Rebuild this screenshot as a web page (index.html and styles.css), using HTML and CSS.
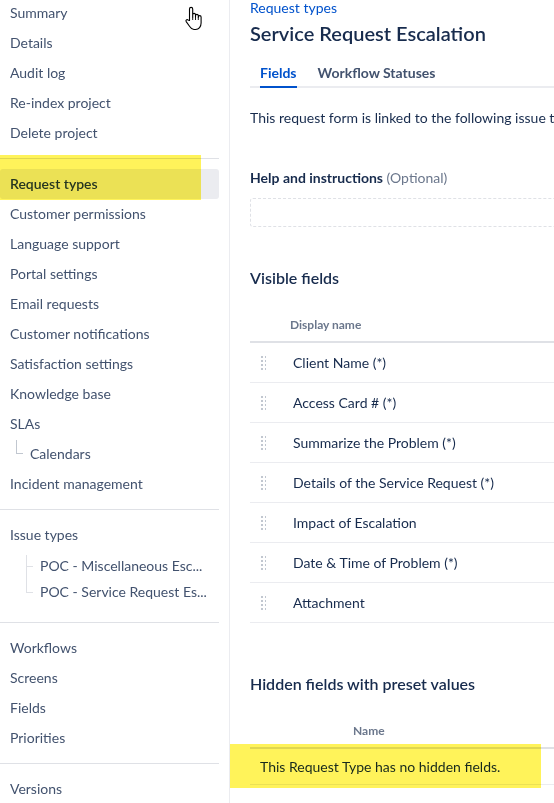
FILE: index.html
```html
<!DOCTYPE html>
<html lang="en">
<head>
<meta charset="utf-8">
<title>Service Request Escalation</title>
<link rel="stylesheet" href="styles.css">
</head>
<body>
<div class="page">
  <aside class="sidebar">
    <nav class="nav">
      <ul class="group first">
        <li class="item">Summary</li>
        <li class="item">Details</li>
        <li class="item">Audit log</li>
        <li class="item">Re-index project</li>
        <li class="item">Delete project</li>
      </ul>
      <hr class="divider">
      <ul class="group">
        <li class="item active">Request types</li>
        <li class="item">Customer permissions</li>
        <li class="item">Language support</li>
        <li class="item">Portal settings</li>
        <li class="item">Email requests</li>
        <li class="item">Customer notifications</li>
        <li class="item">Satisfaction settings</li>
        <li class="item">Knowledge base</li>
        <li class="item">SLAs</li>
        <li class="item child"><span class="tree-end"></span>Calendars</li>
        <li class="item">Incident management</li>
      </ul>
      <hr class="divider">
      <ul class="group">
        <li class="item">Issue types</li>
        <li class="subtree">
          <ul class="sublist">
            <li class="subitem">POC - Miscellaneous Esc...</li>
            <li class="subitem">POC - Service Request Es...</li>
          </ul>
        </li>
      </ul>
      <hr class="divider">
      <ul class="group">
        <li class="item">Workflows</li>
        <li class="item">Screens</li>
        <li class="item">Fields</li>
        <li class="item">Priorities</li>
      </ul>
      <hr class="divider">
      <ul class="group">
        <li class="item">Versions</li>
      </ul>
    </nav>
  </aside>

  <main class="main">
    <a class="breadcrumb">Request types</a>
    <h1 class="title">Service Request Escalation</h1>
    <div class="tabs">
      <span class="tab active">Fields</span>
      <span class="tab">Workflow Statuses</span>
    </div>
    <p class="intro">This request form is linked to the following issue type: POC - Service Request Escalation</p>

    <div class="help-label"><strong>Help and instructions</strong> <span class="optional">(Optional)</span></div>
    <div class="help-box"></div>

    <h2 class="section-title visible-title">Visible fields</h2>
    <div class="table">
      <div class="thead"><span class="th-handle"></span><span class="th">Display name</span></div>
      <div class="row"><span class="handle"></span><span class="cell">Client Name (*)</span></div>
      <div class="row"><span class="handle"></span><span class="cell">Access Card # (*)</span></div>
      <div class="row"><span class="handle"></span><span class="cell">Summarize the Problem (*)</span></div>
      <div class="row"><span class="handle"></span><span class="cell">Details of the Service Request (*)</span></div>
      <div class="row"><span class="handle"></span><span class="cell">Impact of Escalation</span></div>
      <div class="row"><span class="handle"></span><span class="cell">Date &amp; Time of Problem (*)</span></div>
      <div class="row"><span class="handle"></span><span class="cell">Attachment</span></div>
    </div>

    <h2 class="section-title hidden-title">Hidden fields with preset values</h2>
    <div class="table hidden-table">
      <div class="thead"><span class="th name-th">Name</span></div>
      <div class="row empty-row"><span class="empty">This Request Type has no hidden fields.</span></div>
    </div>
  </main>
</div>

<div class="mark mark-nav"></div>
<div class="mark mark-empty"></div>

<svg class="cursor" width="20" height="26" viewBox="0 0 20 26" aria-hidden="true">
  <path d="M5.5 14.5 V3 a1.6 1.6 0 0 1 3.2 0 V11 V8.8 a1.4 1.4 0 0 1 2.8 0 V11 V9.8 a1.4 1.4 0 0 1 2.8 0 V11.5 V11 a1.4 1.4 0 0 1 2.8 0 V17 c0 3.5 -2.2 6.5 -5.5 6.5 H10 c-2.2 0 -3.3 -1.4 -4.3 -3 L2.2 15.6 c-0.8 -1.2 0.7 -2.6 1.8 -1.7 Z" fill="#fff" stroke="#000" stroke-width="1.1" stroke-linejoin="round"/>
  <path d="M8.7 11 V14 M11.5 11 V14 M14.3 11.5 V14" stroke="#000" stroke-width="0.9" fill="none"/>
</svg>
</body>
</html>
```

FILE: styles.css
```css
html, body {
  margin: 0;
  padding: 0;
  background: #fff;
}
body {
  width: 554px;
  height: 803px;
  overflow: hidden;
  position: relative;
  font-family: Lato, "Liberation Sans", Arial, sans-serif;
  font-size: 14px;
  color: #172b4d;
}
.page {
  display: flex;
  align-items: flex-start;
  width: 1100px;
  min-height: 803px;
}

/* Sidebar */
.sidebar {
  flex: 0 0 219px;
  padding-right: 10px;
  border-right: 1px solid #ebecf0;
  min-height: 820px;
}
.nav {
  margin-top: -2px;
}
.group {
  list-style: none;
  margin: 0;
  padding: 0;
}
.item {
  height: 30px;
  line-height: 30px;
  padding-left: 10px;
  color: #42526e;
  white-space: nowrap;
  position: relative;
}
.item.active {
  background: #ebecf0;
  border-radius: 3px;
  color: #253858;
  font-weight: 600;
}
.item.child {
  padding-left: 30px;
}
.tree-end {
  position: absolute;
  left: 16px;
  top: 1px;
  width: 6px;
  height: 13px;
  border-left: 1px solid #c1c7d0;
  border-bottom: 1px solid #c1c7d0;
}
.divider {
  border: 0;
  border-top: 1px solid #dfe1e6;
  margin: 10px 0;
  height: 0;
}
.subtree {
  list-style: none;
  padding: 3px 0 7px 26px;
}
.sublist {
  list-style: none;
  margin: 0;
  padding: 0;
}
.subitem {
  height: 26px;
  line-height: 26px;
  padding-left: 14px;
  color: #42526e;
  white-space: nowrap;
  position: relative;
}
.subitem::before {
  content: "";
  position: absolute;
  left: 0;
  top: 2px;
  width: 6px;
  height: 11px;
  border-left: 1px solid #dfe1e6;
  border-bottom: 1px solid #dfe1e6;
}
.subitem::after {
  content: "";
  position: absolute;
  left: 0;
  top: 13px;
  bottom: 0;
  border-left: 1px solid #dfe1e6;
}
.subitem + .subitem::before {
  top: 0;
  height: 13px;
}
.subitem:last-child::after {
  display: none;
}

/* Main */
.main {
  flex: 0 0 860px;
  padding-left: 20px;
  margin-top: -2px;
}
.breadcrumb {
  display: block;
  line-height: 20px;
  color: #0052cc;
  text-decoration: none;
}
.title {
  margin: 1px 0 0;
  font-size: 20px;
  line-height: 28px;
  font-weight: 600;
  color: #172b4d;
}
.tabs {
  display: flex;
  gap: 21px;
  margin-top: 16px;
  padding-left: 10px;
  box-shadow: inset 0 -2px 0 #ebecf0;
}
.tab {
  line-height: 20px;
  padding-bottom: 3px;
  border-bottom: 2px solid transparent;
  font-weight: 700;
  color: #42526e;
}
.tab.active {
  color: #0052cc;
  border-bottom-color: #0052cc;
}
.intro {
  margin: 20px 0 0;
  line-height: 20px;
  white-space: nowrap;
}
.help-label {
  margin-top: 40px;
  line-height: 20px;
}
.help-label strong {
  font-weight: 700;
}
.optional {
  color: #6b778c;
}
.help-box {
  margin-top: 10px;
  height: 27px;
  border: 1px dashed #dfe1e6;
  border-radius: 3px;
}
.section-title {
  margin: 0;
  font-size: 16px;
  line-height: 24px;
  font-weight: 600;
  color: #172b4d;
}
.visible-title {
  margin-top: 39px;
}
.hidden-title {
  margin-top: 49px;
}
.table {
  margin-top: 20px;
}
.thead {
  display: flex;
  padding: 7px 0 8px;
  border-bottom: 2px solid #dfe1e6;
  font-size: 12px;
  line-height: 16px;
  font-weight: 700;
  color: #6b778c;
}
.th-handle {
  width: 40px;
}
.row {
  display: flex;
  align-items: center;
  height: 39px;
  border-bottom: 1px solid #ebecf0;
}
.handle {
  width: 6px;
  height: 16px;
  margin-left: 10px;
  margin-right: 27px;
  background-image: radial-gradient(circle at 1px 1px, #c1c7d0 1px, transparent 1.2px);
  background-position: 1px 1px;
  background-size: 4px 4px;
}
.cell {
  white-space: nowrap;
}
.hidden-table .thead {
  padding-top: 7px;
}
.name-th {
  padding-left: 103px;
}
.empty-row {
  height: 35px;
}
.empty {
  padding-left: 10px;
}

/* Annotation overlays */
.mark {
  position: absolute;
  background: #fff35a;
  mix-blend-mode: multiply;
  pointer-events: none;
}
.mark-nav {
  left: 0;
  top: 155px;
  width: 201px;
  height: 45px;
}
.mark-empty {
  left: 230px;
  top: 744px;
  width: 311px;
  height: 44px;
}
.cursor {
  position: absolute;
  left: 184px;
  top: 6px;
}
```
